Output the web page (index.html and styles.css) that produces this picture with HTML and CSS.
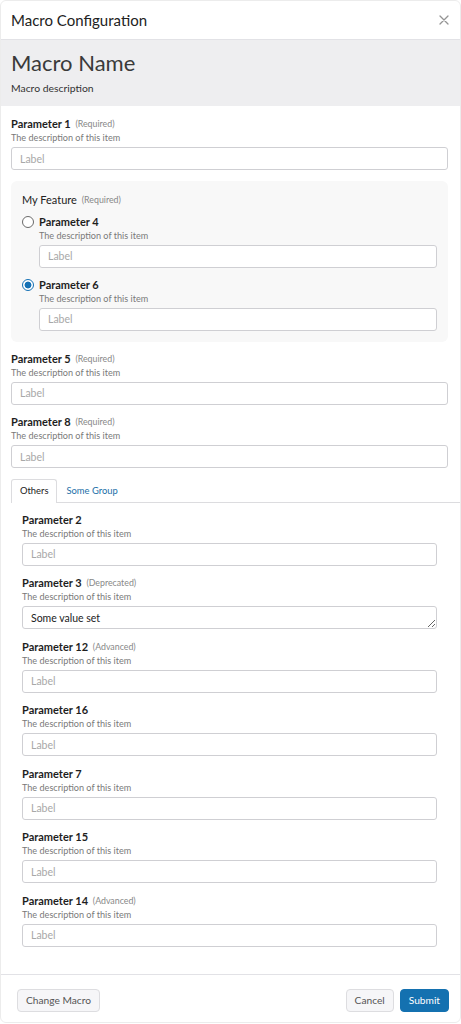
FILE: index.html
```html
<!DOCTYPE html>
<html>
<head>
<meta charset="utf-8">
<link rel="stylesheet" href="styles.css">
</head>
<body>
<div class="modal">
  <div class="modal-header">
    <div class="modal-title">Macro Configuration</div>
    <button class="close" aria-label="Close">
      <svg width="10" height="10" viewBox="0 0 10 10"><path d="M1 1L9 9M9 1L1 9" stroke="#949494" stroke-width="1.3" stroke-linecap="round"/></svg>
    </button>
  </div>
  <div class="macro-info">
    <div class="macro-name">Macro Name</div>
    <div class="macro-desc">Macro description</div>
  </div>
  <div class="modal-body">
    <div class="field">
      <div class="label">Parameter 1 <span class="tag">(Required)</span></div>
      <div class="desc">The description of this item</div>
      <input class="input" placeholder="Label">
    </div>

    <div class="feature">
      <div class="feature-title">My Feature <span class="tag">(Required)</span></div>
      <div class="radio-field">
        <div class="radio-row"><span class="radio"></span><span class="label">Parameter 4</span></div>
        <div class="radio-body">
          <div class="desc">The description of this item</div>
          <input class="input" placeholder="Label">
        </div>
      </div>
      <div class="radio-field">
        <div class="radio-row"><span class="radio checked"></span><span class="label">Parameter 6</span></div>
        <div class="radio-body">
          <div class="desc">The description of this item</div>
          <input class="input" placeholder="Label">
        </div>
      </div>
    </div>

    <div class="field">
      <div class="label">Parameter 5 <span class="tag">(Required)</span></div>
      <div class="desc">The description of this item</div>
      <input class="input" placeholder="Label">
    </div>
    <div class="field">
      <div class="label">Parameter 8 <span class="tag">(Required)</span></div>
      <div class="desc">The description of this item</div>
      <input class="input" placeholder="Label">
    </div>

    <div class="tabs">
      <div class="tab active">Others</div>
      <div class="tab">Some Group</div>
    </div>
    <div class="tab-pane">
      <div class="field">
        <div class="label">Parameter 2</div>
        <div class="desc">The description of this item</div>
        <input class="input" placeholder="Label">
      </div>
      <div class="field">
        <div class="label">Parameter 3 <span class="tag">(Deprecated)</span></div>
        <div class="desc">The description of this item</div>
        <textarea class="input textarea" rows="1">Some value set</textarea>
      </div>
      <div class="field">
        <div class="label">Parameter 12 <span class="tag">(Advanced)</span></div>
        <div class="desc">The description of this item</div>
        <input class="input" placeholder="Label">
      </div>
      <div class="field">
        <div class="label">Parameter 16</div>
        <div class="desc">The description of this item</div>
        <input class="input" placeholder="Label">
      </div>
      <div class="field">
        <div class="label">Parameter 7</div>
        <div class="desc">The description of this item</div>
        <input class="input" placeholder="Label">
      </div>
      <div class="field">
        <div class="label">Parameter 15</div>
        <div class="desc">The description of this item</div>
        <input class="input" placeholder="Label">
      </div>
      <div class="field">
        <div class="label">Parameter 14 <span class="tag">(Advanced)</span></div>
        <div class="desc">The description of this item</div>
        <input class="input" placeholder="Label">
      </div>
    </div>
  </div>
  <div class="modal-footer">
    <button class="btn">Change Macro</button>
    <div class="spacer"></div>
    <button class="btn">Cancel</button>
    <button class="btn primary">Submit</button>
  </div>
</div>
</body>
</html>
```

FILE: styles.css
```css
* { box-sizing: border-box; }
html, body { margin: 0; padding: 0; background: #fff; }
body { font-family: Lato, "Open Sans", "Liberation Sans", sans-serif; color: #222; }

.modal {
  width: 461px;
  height: 1023px;
  border: 1px solid #ececec;
  border-radius: 6px;
  display: flex;
  flex-direction: column;
  overflow: hidden;
  background: #fff;
}

.modal-header {
  height: 39px;
  display: flex;
  align-items: center;
  justify-content: space-between;
  padding: 0 9px 0 10px;
  border-bottom: 1px solid #e2e2e6;
  flex: none;
}
.modal-title { font-size: 15px; color: #222; }
.close { background: none; border: 0; padding: 0; width: 14px; height: 14px; display: flex; align-items: center; justify-content: center; cursor: pointer; }

.macro-info {
  background: #eeeef0;
  padding: 9px 10px 10px;
  height: 66px;
  flex: none;
}
.macro-name { font-size: 22px; font-weight: 400; color: #3a3a3a; line-height: 28px; }
.macro-desc { font-size: 10.4px; color: #333; margin-top: 5px; line-height: 12px; }

.modal-body {
  flex: 1;
  padding: 11px 0 0 10px;
}

.field { margin-bottom: 10.5px; padding-right: 12px; }
.label { font-size: 11px; font-weight: 700; color: #1e1e1e; line-height: 14px; }
.tag { font-size: 8.8px; font-weight: 400; color: #888; margin-left: 2px; vertical-align: 1px; }
.desc { font-size: 9.1px; color: #7a7a7a; line-height: 14px; margin-bottom: 2px; }

.input {
  display: block;
  width: 100%;
  height: 23px;
  border: 1px solid #cfcfd3;
  border-radius: 3px;
  padding: 0 8px;
  font-family: inherit;
  font-size: 10.5px;
  color: #222;
  background: #fff;
  outline: none;
}
.input::placeholder { color: #a8a8a8; }
.textarea { resize: vertical; padding-top: 4px; line-height: 14px; overflow: hidden; }

.feature {
  background: #f8f8f8;
  border-radius: 6px;
  padding: 12px 11px 11px 11px;
  margin: 0 12px 10px 0;
}
.feature-title { font-size: 11px; color: #222; line-height: 14px; margin-bottom: 8px; }
.radio-field { margin-bottom: 10px; }
.radio-field:last-child { margin-bottom: 0; }
.radio-row { display: flex; align-items: center; gap: 5px; height: 14px; }
.radio {
  width: 12px; height: 12px; border-radius: 50%;
  border: 1px solid #6a6a6a; background: #fff; flex: none;
}
.radio.checked {
  border: 1.5px solid #1471b5;
  background: radial-gradient(circle, #1471b5 0 3.2px, #fff 3.7px);
}
.radio-body { padding-left: 17px; }

.tabs {
  display: flex;
  border-bottom: 1px solid #dcdcdf;
  margin-top: 1px;
  height: 24px;
  margin-bottom: 10px;
}
.tab {
  font-size: 9.4px;
  line-height: 22px;
  padding: 0 8px;
  color: #1a6fa8;
  border: 1px solid transparent;
  border-bottom: 0;
  border-radius: 3px 3px 0 0;
}
.tab.active {
  color: #222;
  border-color: #dcdcdf;
  background: #fff;
  height: 24px;
  margin-bottom: -1px;
}
.tab-pane { padding-left: 11px; padding-right: 11px; }

.modal-footer {
  flex: none;
  height: 48px;
  border-top: 1px solid #e2e2e6;
  display: flex;
  align-items: center;
  padding: 3px 11px 0 16px;
  gap: 6px;
}
.spacer { flex: 1; }
.btn {
  height: 23px;
  padding: 0 8px;
  font-family: inherit;
  font-size: 10.2px;
  color: #555;
  background: #f6f6f8;
  border: 1px solid #dddde0;
  border-radius: 4px;
}
.btn.primary {
  background: #1471b0;
  border-color: #1471b0;
  color: #fff;
}
```
